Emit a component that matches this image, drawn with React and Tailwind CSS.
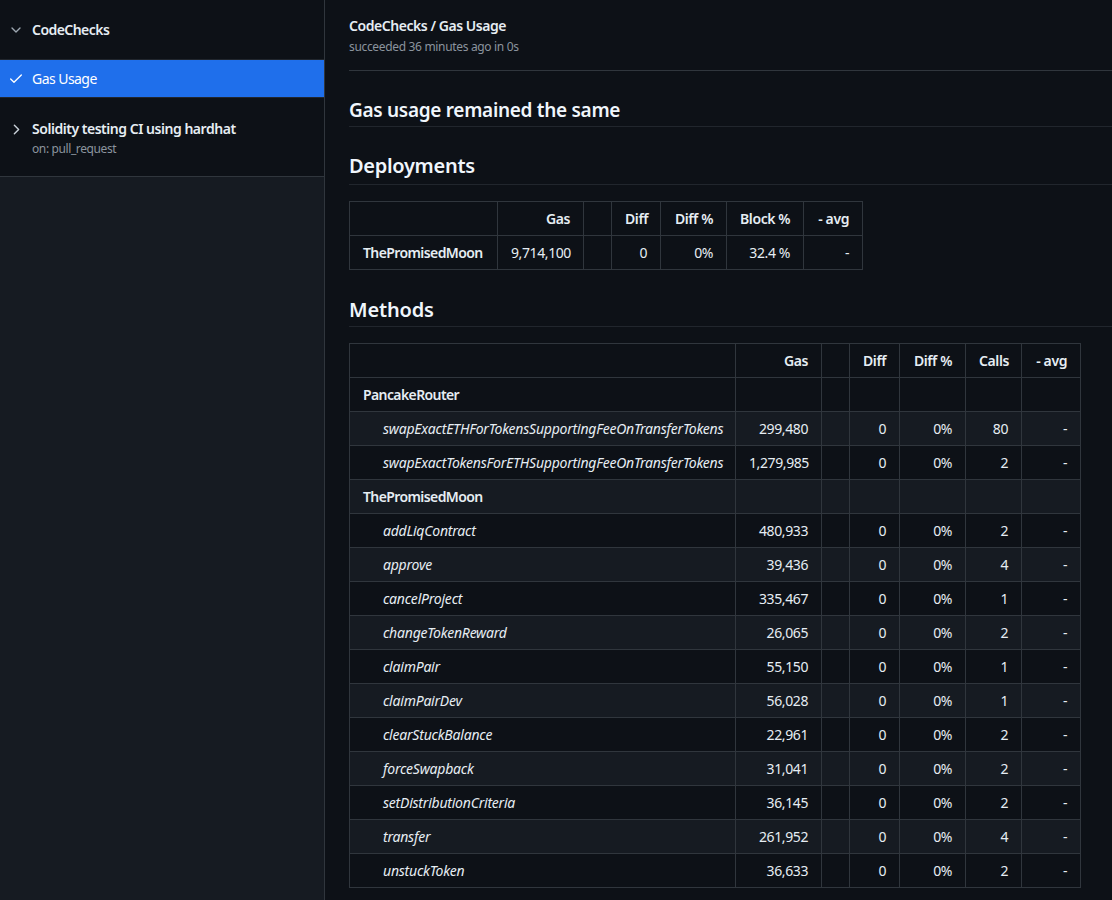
import React from 'react'
import { ChevronDown, ChevronRight, Check } from 'lucide-react'

const deployCols = ['w-[148px]', 'w-[86px]', 'w-[28px]', 'w-[49px]', 'w-[66px]', 'w-[77px]', 'w-[59px]']
const methodCols = ['w-[386px]', 'w-[86px]', 'w-[28px]', 'w-[50px]', 'w-[66px]', 'w-[56px]', 'w-[59px]']

const pancake = [
  ['swapExactETHForTokensSupportingFeeOnTransferTokens', '299,480', '80'],
  ['swapExactTokensForETHSupportingFeeOnTransferTokens', '1,279,985', '2'],
]

const moon = [
  ['addLiqContract', '480,933', '2'],
  ['approve', '39,436', '4'],
  ['cancelProject', '335,467', '1'],
  ['changeTokenReward', '26,065', '2'],
  ['claimPair', '55,150', '1'],
  ['claimPairDev', '56,028', '1'],
  ['clearStuckBalance', '22,961', '2'],
  ['forceSwapback', '31,041', '2'],
  ['setDistributionCriteria', '36,145', '2'],
  ['transfer', '261,952', '4'],
  ['unstuckToken', '36,633', '2'],
]

// numbers and headers sit on the right, names pass className for the left
const Cell = ({ children, className = 'px-[13px] text-right' }) => (
  <td className={`h-[34px] border border-[#30363d] py-0 whitespace-nowrap ${className}`}>{children}</td>
)

const Heading = ({ children, className = '' }) => (
  <h2 className={`border-b border-[#21262d] leading-[26px] font-semibold text-[#f0f6fc] ${className}`}>{children}</h2>
)

const Cols = ({ widths }) => (
  <colgroup>
    {widths.map((w, i) => <col key={i} className={w} />)}
  </colgroup>
)

const App = () => {
  const rows = []
  rows.push({ group: 'PancakeRouter' })
  pancake.forEach((r) => rows.push({ method: r }))
  rows.push({ group: 'ThePromisedMoon' })
  moon.forEach((r) => rows.push({ method: r }))

  const nameCell = 'px-[13px] text-left font-semibold tracking-[-0.6px]'

  return (
    <div className="flex h-[900px] w-[1112px] overflow-hidden bg-[#0d1117] text-[14px] text-[#e6edf3] font-['Noto_Sans','Open_Sans',sans-serif] tracking-[-0.4px]">
      <aside className="flex w-[325px] shrink-0 flex-col border-r border-[#30363d] bg-[#161b22]">
        <div className="border-b border-[#30363d] bg-[#0d1117]">
          <div className="flex h-[59px] items-center pl-[8px]">
            <ChevronDown size={16} className="text-[#9da7b1]" strokeWidth={2} />
            <span className="ml-[8px] font-semibold tracking-[-0.55px]">CodeChecks</span>
          </div>
          <div className="flex h-[39px] items-center border-y border-[#21262d] bg-[#1f6feb] pl-[8px] text-white">
            <Check size={16} strokeWidth={2} />
            <span className="ml-[8px] tracking-[-0.55px]">Gas Usage</span>
          </div>
          <div className="flex h-[78px] items-start pl-[8px] pt-[19px]">
            <ChevronRight size={17} className="mt-[4px] text-[#c9d1d9]" strokeWidth={2} />
            <div className="ml-[7px]">
              <div className="leading-[24px] font-semibold tracking-[-0.47px]">Solidity testing CI using hardhat</div>
              <div className="text-[12px] leading-[16px] text-[#8b949e] tracking-[-0.39px]">on: pull_request</div>
            </div>
          </div>
        </div>
      </aside>

      <main className="min-w-0 flex-1 pl-[24px]">
        <div className="h-[71px] border-b border-[#30363d] pt-[15px]">
          <div className="leading-[21px] font-semibold tracking-[-0.45px]">CodeChecks / Gas Usage</div>
          <div className="mt-[2px] text-[12px] leading-[18px] text-[#8b949e] tracking-[-0.33px]">succeeded 36 minutes ago in 0s</div>
        </div>

        <Heading className="mt-[26px] pb-[3px] text-[19px] tracking-[-0.3px]">Gas usage remained the same</Heading>
        <Heading className="mt-[26px] pb-[5px] text-[20px] tracking-[-0.3px]">Deployments</Heading>

        <table className="mt-[16px] w-[513px] table-fixed border-collapse">
          <Cols widths={deployCols} />
          <tbody>
            <tr className="font-semibold">
              <Cell /><Cell>Gas</Cell><Cell /><Cell>Diff</Cell><Cell>Diff %</Cell><Cell>Block %</Cell><Cell>- avg</Cell>
            </tr>
            <tr>
              <Cell className={nameCell}>ThePromisedMoon</Cell>
              <Cell>9,714,100</Cell><Cell /><Cell>0</Cell><Cell>0%</Cell><Cell>32.4 %</Cell><Cell>-</Cell>
            </tr>
          </tbody>
        </table>

        <Heading className="mt-[27px] pb-[3px] text-[20px] tracking-[-0.15px]">Methods</Heading>

        <table className="mt-[16px] w-[731px] table-fixed border-collapse">
          <Cols widths={methodCols} />
          <tbody>
            <tr className="font-semibold">
              <Cell /><Cell>Gas</Cell><Cell /><Cell>Diff</Cell><Cell>Diff %</Cell><Cell>Calls</Cell><Cell>- avg</Cell>
            </tr>
            {rows.map((r, i) => (
              <tr key={i} className={i % 2 === 1 ? 'bg-[#161b22]' : ''}>
                {r.group ? (
                  <>
                    <Cell className={nameCell}>{r.group}</Cell>
                    <Cell /><Cell /><Cell /><Cell /><Cell /><Cell />
                  </>
                ) : (
                  <>
                    <Cell className="pl-[33px] pr-[13px] text-left italic tracking-[-0.22px]">{r.method[0]}</Cell>
                    <Cell>{r.method[1]}</Cell><Cell /><Cell>0</Cell><Cell>0%</Cell><Cell>{r.method[2]}</Cell><Cell>-</Cell>
                  </>
                )}
              </tr>
            ))}
          </tbody>
        </table>
      </main>
    </div>
  )
}

export default App
